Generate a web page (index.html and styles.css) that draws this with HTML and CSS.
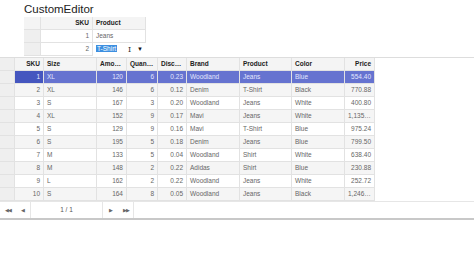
FILE: index.html
```html
<!DOCTYPE html>
<html lang="en">
<head>
    <meta charset="UTF-8">
    <title>CustomEditor</title>
    <link rel="stylesheet" href="styles.css">
</head>
<body>
    <!-- Title -->
    <div class="title">CustomEditor</div>

    <!-- Small grid with editor -->
    <div class="mini-grid">
        <div class="mini-row head">
            <div class="cell rh"></div>
            <div class="cell num">SKU</div>
            <div class="cell">Product</div>
        </div>
        <div class="mini-row">
            <div class="cell rh"></div>
            <div class="cell num">1</div>
            <div class="cell">Jeans</div>
        </div>
        <div class="mini-row">
            <div class="cell rh"></div>
            <div class="cell num">2</div>
            <div class="cell editor">
                <span class="sel">T-Shirt</span>
                <span class="ibeam">I</span>
                <span class="drop">&#9660;</span>
            </div>
        </div>
    </div>

    <!-- Main grid -->
    <div class="grid">
        <div class="grid-row head">
            <div class="cell rh"></div>
            <div class="cell num">SKU</div>
            <div class="cell">Size</div>
            <div class="cell num">Amount</div>
            <div class="cell num">Quantity</div>
            <div class="cell num">Discount</div>
            <div class="cell">Brand</div>
            <div class="cell">Product</div>
            <div class="cell">Color</div>
            <div class="cell num">Price</div>
        </div>
        <div id="rows"></div>

        <!-- Pager -->
        <div class="pager">
            <div class="pg-btn">&#9664;&#9664;</div>
            <div class="pg-btn">&#9664;</div>
            <div class="pg-text">1 / 1</div>
            <div class="pg-btn">&#9654;</div>
            <div class="pg-btn">&#9654;&#9654;</div>
        </div>
    </div>

    <script>
        const data = [
            [1, 'XL', 120, 6, '0.23', 'Woodland', 'Jeans', 'Blue', '554.40'],
            [2, 'XL', 146, 6, '0.12', 'Denim', 'T-Shirt', 'Black', '770.88'],
            [3, 'S', 167, 3, '0.20', 'Woodland', 'Jeans', 'White', '400.80'],
            [4, 'XL', 152, 9, '0.17', 'Mavi', 'Jeans', 'White', '1,135.44'],
            [5, 'S', 129, 9, '0.16', 'Mavi', 'T-Shirt', 'Blue', '975.24'],
            [6, 'S', 195, 5, '0.18', 'Denim', 'Jeans', 'Blue', '799.50'],
            [7, 'M', 133, 5, '0.04', 'Woodland', 'Shirt', 'White', '638.40'],
            [8, 'M', 148, 2, '0.22', 'Adidas', 'Shirt', 'Blue', '230.88'],
            [9, 'L', 162, 2, '0.22', 'Woodland', 'Jeans', 'White', '252.72'],
            [10, 'S', 164, 8, '0.05', 'Woodland', 'Jeans', 'Black', '1,246.40']
        ];
        const numCols = [0, 2, 3, 4, 8];
        const rows = document.getElementById('rows');

        data.forEach((item, i) => {
            const row = document.createElement('div');
            row.className = 'grid-row' + (i % 2 ? ' alt' : '') + (i === 0 ? ' selected' : '');
            let html = '<div class="cell rh"></div>';
            item.forEach((val, c) => {
                const cls = 'cell' + (numCols.includes(c) ? ' num' : '') + (c === 0 && i === 0 ? ' focus' : '');
                html += `<div class="${cls}">${val}</div>`;
            });
            row.innerHTML = html;
            rows.appendChild(row);
        });
    </script>
</body>
</html>
```

FILE: styles.css
```css
/* Global */
body {
    margin: 0;
    font-family: 'Liberation Sans', Arial, sans-serif;
    background: #fff;
    color: #333;
}

.title {
    height: 17px;
    padding-left: 24px;
    font-size: 11.5px;
    line-height: 18px;
    color: #222;
}

/* Cells shared */
.cell {
    box-sizing: border-box;
    height: 13px;
    padding: 0 3px;
    border-right: 1px solid #e2e2e2;
    border-bottom: 1px solid #e2e2e2;
    font-size: 6.5px;
    line-height: 12px;
    color: #666;
    white-space: nowrap;
    overflow: hidden;
    text-overflow: ellipsis;
}
.cell.num {
    text-align: right;
}
.cell.rh {
    background-color: #efefef;
}
.head .cell {
    background-color: #f4f4f4;
    color: #222;
    font-weight: bold;
}

/* Small grid */
.mini-grid {
    margin-left: 24px;
    width: 122px;
}
.mini-row {
    display: grid;
    grid-template-columns: 17px 52px 53px;
}
.mini-row .cell.editor {
    position: relative;
    border-right: none;
    border-bottom: none;
    background: #fff;
    padding-left: 3px;
}
.editor .sel {
    background-color: #3d8fe0;
    color: #fff;
    padding: 0 1px;
}
.editor .ibeam {
    position: absolute;
    left: 35px;
    top: 1px;
    font-family: 'DejaVu Serif', serif;
    font-size: 8px;
    color: #333;
}
.editor .drop {
    position: absolute;
    left: 44px;
    top: 0;
    font-size: 6px;
    color: #111;
}

/* Main grid */
.grid {
    margin-top: 1px;
    border-top: 1px solid #ddd;
    border-bottom: 2px solid #c8c8c8;
}
.grid-row {
    display: grid;
    grid-template-columns: 15px 29px 53px 30px 31px 29px 53px 52px 53px 30px;
}
.grid-row.alt .cell {
    background-color: #f5f5f5;
}
.grid-row.alt .cell.rh,
.grid-row .cell.rh {
    background-color: #efefef;
}
.grid-row.selected .cell {
    background-color: #6673d0;
    color: #e4e7ff;
}
.grid-row.selected .cell.focus {
    background-color: #4556bf;
}
.grid-row.selected .cell.rh {
    background-color: #efefef;
}

/* Pager */
.pager {
    display: flex;
    height: 16px;
    border-top: 1px solid #e6e6e6;
}
.pg-btn {
    width: 15px;
    font-size: 5px;
    line-height: 16px;
    text-align: center;
    color: #666;
    letter-spacing: -1px;
}
.pg-text {
    width: 71px;
    border-left: 1px solid #e6e6e6;
    border-right: 1px solid #e6e6e6;
    font-size: 6.5px;
    line-height: 16px;
    text-align: center;
    color: #555;
}
.pager .pg-btn:last-child {
    border-right: 1px solid #e6e6e6;
}
```
